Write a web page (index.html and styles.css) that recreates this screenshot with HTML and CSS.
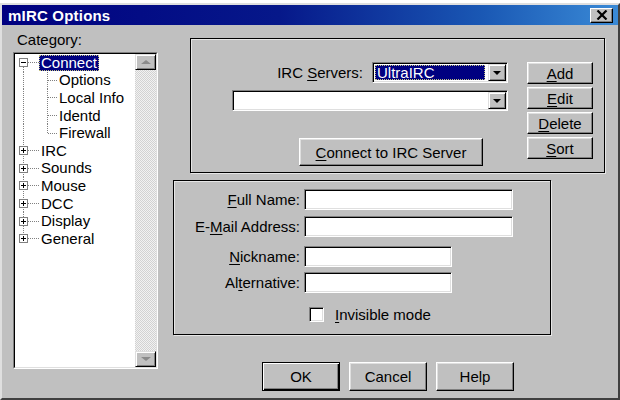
FILE: index.html
```html
<!DOCTYPE html>
<html>
<head>
<meta charset="utf-8">
<title>mIRC Options</title>
<link rel="stylesheet" href="styles.css">
</head>
<body>
<div class="window">
  <div class="titlebar">
    <span class="title">mIRC Options</span>
    <span class="close"><svg width="12" height="10" viewBox="0 0 12 10"><path d="M1.5 0.5 L10.5 9.5 M10.5 0.5 L1.5 9.5" stroke="#000" stroke-width="2.2" fill="none"/></svg></span>
  </div>
  <div class="content">
    <div class="left">
      <div class="cat-label">Category:</div>
      <div class="tree">
        <div class="tree-in">
          <div class="tree-list">
            <div class="row">
              <div class="tg first"><svg class="box" width="9" height="9" viewBox="0 0 9 9"><rect x="0.5" y="0.5" width="8" height="8" fill="#fff" stroke="#808080"/><path d="M2 4.5h5" stroke="#000"/></svg><span class="h"></span></div>
              <span class="lbl sel">Connect</span>
            </div>
            <div class="row"><div class="tg"></div><div class="tc"><span class="h"></span></div><span class="lbl">Options</span></div>
            <div class="row"><div class="tg"></div><div class="tc"><span class="h"></span></div><span class="lbl">Local Info</span></div>
            <div class="row"><div class="tg"></div><div class="tc"><span class="h"></span></div><span class="lbl">Identd</span></div>
            <div class="row"><div class="tg"></div><div class="tc last"><span class="h"></span></div><span class="lbl">Firewall</span></div>
            <div class="row">
              <div class="tg"><svg class="box" width="9" height="9" viewBox="0 0 9 9"><rect x="0.5" y="0.5" width="8" height="8" fill="#fff" stroke="#808080"/><path d="M2 4.5h5M4.5 2v5" stroke="#000"/></svg><span class="h"></span></div>
              <span class="lbl">IRC</span>
            </div>
            <div class="row">
              <div class="tg"><svg class="box" width="9" height="9" viewBox="0 0 9 9"><rect x="0.5" y="0.5" width="8" height="8" fill="#fff" stroke="#808080"/><path d="M2 4.5h5M4.5 2v5" stroke="#000"/></svg><span class="h"></span></div>
              <span class="lbl">Sounds</span>
            </div>
            <div class="row">
              <div class="tg"><svg class="box" width="9" height="9" viewBox="0 0 9 9"><rect x="0.5" y="0.5" width="8" height="8" fill="#fff" stroke="#808080"/><path d="M2 4.5h5M4.5 2v5" stroke="#000"/></svg><span class="h"></span></div>
              <span class="lbl">Mouse</span>
            </div>
            <div class="row">
              <div class="tg"><svg class="box" width="9" height="9" viewBox="0 0 9 9"><rect x="0.5" y="0.5" width="8" height="8" fill="#fff" stroke="#808080"/><path d="M2 4.5h5M4.5 2v5" stroke="#000"/></svg><span class="h"></span></div>
              <span class="lbl">DCC</span>
            </div>
            <div class="row">
              <div class="tg"><svg class="box" width="9" height="9" viewBox="0 0 9 9"><rect x="0.5" y="0.5" width="8" height="8" fill="#fff" stroke="#808080"/><path d="M2 4.5h5M4.5 2v5" stroke="#000"/></svg><span class="h"></span></div>
              <span class="lbl">Display</span>
            </div>
            <div class="row">
              <div class="tg last"><svg class="box" width="9" height="9" viewBox="0 0 9 9"><rect x="0.5" y="0.5" width="8" height="8" fill="#fff" stroke="#808080"/><path d="M2 4.5h5M4.5 2v5" stroke="#000"/></svg><span class="h"></span></div>
              <span class="lbl">General</span>
            </div>
          </div>
          <div class="scrollbar">
            <div class="sb-btn"><span class="arrow-up"></span></div>
            <div class="sb-track"></div>
            <div class="sb-btn"><span class="arrow-down"></span></div>
          </div>
        </div>
      </div>
    </div>

    <div class="right">
      <div class="group gb-server">
        <div class="server-main">
          <div class="server-row">
            <span class="server-label">IRC <u>S</u>ervers:</span>
            <div class="combo c1">
              <div class="combo-field"><span class="sel-text">UltraIRC</span></div>
              <div class="combo-btn"><span class="arrow-down dark"></span></div>
            </div>
          </div>
          <div class="combo c2">
            <div class="combo-field"></div>
            <div class="combo-btn"><span class="arrow-down dark"></span></div>
          </div>
          <div class="btn connect"><span><u>C</u>onnect to IRC Server</span></div>
        </div>
        <div class="server-btns">
          <div class="btn side"><span><u>A</u>dd</span></div>
          <div class="btn side"><span><u>E</u>dit</span></div>
          <div class="btn side"><span><u>D</u>elete</span></div>
          <div class="btn side"><span><u>S</u>ort</span></div>
        </div>
      </div>

      <div class="group gb-user">
        <div class="frow r1"><span class="flabel"><u>F</u>ull Name:</span><div class="input wide"></div></div>
        <div class="frow r2"><span class="flabel">E-<u>M</u>ail Address:</span><div class="input wide"></div></div>
        <div class="frow r3"><span class="flabel"><u>N</u>ickname:</span><div class="input narrow"></div></div>
        <div class="frow r4"><span class="flabel">Al<u>t</u>ernative:</span><div class="input narrow"></div></div>
        <div class="frow r5"><span class="flabel"></span><div class="check"></div><span class="check-text"><u>I</u>nvisible mode</span></div>
      </div>

      <div class="dlg-btns">
        <div class="btn dlg default"><span>OK</span></div>
        <div class="btn dlg"><span>Cancel</span></div>
        <div class="btn dlg"><span>Help</span></div>
      </div>
    </div>
  </div>
</div>
</body>
</html>
```

FILE: styles.css
```css
* { box-sizing: border-box; }
html, body { margin: 0; padding: 0; }
body {
  background: #fff;
  font-family: "Liberation Sans", Arial, sans-serif;
  font-size: 15px;
  color: #000;
  width: 620px;
  height: 400px;
  overflow: hidden;
  padding-top: 3px;
}
u { text-decoration: underline; text-underline-offset: 2px; }

.window {
  width: 620px;
  height: 397px;
  background: #c0c0c0;
  border: 2px solid;
  border-color: #dfdfdf #404040 #404040 #dfdfdf;
  display: flex;
  flex-direction: column;
}

.titlebar {
  height: 20px;
  flex: none;
  background: linear-gradient(to right, #000080 0%, #06188a 45%, #1a58b4 78%, #3a8ad6 100%);
  display: flex;
  align-items: center;
  justify-content: space-between;
  padding: 0 5px 0 6px;
}
.title { color: #fff; font-weight: bold; font-size: 15px; letter-spacing: 0.2px; }
.close {
  width: 23px;
  height: 15px;
  background: #c0c0c0;
  border: 1px solid;
  border-color: #fff #000 #000 #fff;
  box-shadow: inset -1px -1px 0 #808080;
  display: flex;
  align-items: center;
  justify-content: center;
}

.content { flex: 1; display: flex; padding: 6px 0 0 11px; gap: 15px; }

/* left column */
.left { width: 145px; flex: none; display: flex; flex-direction: column; }
.cat-label { height: 17px; line-height: 17px; margin-bottom: 4px; padding-left: 4px; }
.tree {
  height: 317px;
  border: 1px solid;
  border-color: #808080 #fff #fff #808080;
}
.tree-in {
  height: 100%;
  display: flex;
  background: #fff;
  border: 1px solid;
  border-color: #000 #dfdfdf #dfdfdf #000;
}
.tree-list { flex: 1; min-width: 0; }
.row { height: 17.6px; display: flex; align-items: center; }
.tg, .tc {
  height: 100%;
  flex: none;
  display: flex;
  align-items: center;
  background-image: repeating-linear-gradient(to bottom, #808080 0 1px, transparent 1px 2px);
  background-repeat: no-repeat;
  background-size: 1px 100%;
  background-position: 8px 0;
}
.tg { width: 24px; padding-left: 4px; }
.tc { width: 18px; padding-left: 9px; }
.tg.first { background-size: 1px 50%; background-position: 8px 100%; }
.tg.last, .tc.last { background-size: 1px 50%; background-position: 8px 0; }
.box { flex: none; display: block; }
.h {
  flex: 1;
  height: 1px;
  background: repeating-linear-gradient(to right, #808080 0 1px, transparent 1px 2px);
}
.lbl { padding: 0 2px; line-height: 16px; white-space: nowrap; }
.lbl.sel { background: #000080; color: #fff; outline: 1px dotted #c0c080; outline-offset: -1px; }

.scrollbar {
  width: 21px;
  flex: none;
  display: flex;
  flex-direction: column;
  background: repeating-conic-gradient(#d2d2d2 0 25%, #f2f2f2 0 50%) 0 0 / 2px 2px;
}
.sb-btn {
  height: 16px;
  flex: none;
  background: #c0c0c0;
  border: 1px solid;
  border-color: #dfdfdf #000 #000 #dfdfdf;
  box-shadow: inset 1px 1px 0 #fff, inset -1px -1px 0 #808080;
  display: flex;
  align-items: center;
  justify-content: center;
}
.sb-track { flex: 1; }
.arrow-up {
  width: 0; height: 0;
  border-left: 5px solid transparent;
  border-right: 5px solid transparent;
  border-bottom: 4px solid #8a8a8a;
}
.arrow-down {
  width: 0; height: 0;
  border-left: 5px solid transparent;
  border-right: 5px solid transparent;
  border-top: 4px solid #8a8a8a;
}
.arrow-down.dark { border-left-width: 4px; border-right-width: 4px; border-top-color: #000; }

/* right column */
.right { flex: 1; display: flex; flex-direction: column; }
.group {
  border: 1px solid #000;
  box-shadow: 1px 1px 0 #e6e6e6, inset 1px 1px 0 #e6e6e6;
}
.gb-server {
  margin: 7px 0 0 17px;
  width: 415px;
  height: 135px;
  display: flex;
}
.server-main { width: 317px; display: flex; flex-direction: column; padding-top: 23px; }
.server-row { display: flex; align-items: center; justify-content: flex-end; }
.server-label { margin-right: 9px; white-space: nowrap; }

.combo {
  height: 21px;
  display: flex;
  background: #fff;
  border: 1px solid;
  border-color: #808080 #fff #fff #808080;
  box-shadow: inset 1px 1px 0 #000, inset -1px -1px 0 #dfdfdf;
  padding: 1px;
}
.c1 { width: 136px; }
.c2 { width: 276px; margin: 7px 0 0 41px; }
.combo-field { flex: 1; display: flex; padding: 1px; }
.sel-text {
  flex: 1;
  background: #000080;
  color: #fff;
  line-height: 15px;
  padding-left: 2px;
  margin-right: 2px;
  outline: 1px dotted #c0c080;
  outline-offset: -1px;
}
.combo-btn {
  width: 18px;
  flex: none;
  background: #c0c0c0;
  border: 1px solid;
  border-color: #dfdfdf #000 #000 #dfdfdf;
  box-shadow: inset 1px 1px 0 #fff, inset -1px -1px 0 #808080;
  display: flex;
  align-items: center;
  justify-content: center;
}

.btn {
  display: flex;
  align-items: center;
  justify-content: center;
  background: #c0c0c0;
  border: 1px solid;
  border-color: #fff #000 #000 #fff;
  box-shadow: inset -1px -1px 0 #808080, inset 1px 1px 0 #dfdfdf;
  white-space: nowrap;
}
.connect { width: 184px; height: 28px; margin: 27px 0 0 108px; }
.server-btns { width: 66px; margin-left: 19px; padding-top: 23px; display: flex; flex-direction: column; gap: 3px; }
.side { height: 22px; }

.gb-user {
  margin-top: 7px;
  width: 378px;
  height: 155px;
  padding-top: 8px;
  display: flex;
  flex-direction: column;
}
.frow { display: flex; align-items: center; }
.flabel { width: 126px; text-align: right; white-space: nowrap; flex: none; }
.input {
  height: 21px;
  margin-left: 4px;
  background: #fff;
  border: 1px solid;
  border-color: #808080 #fff #fff #808080;
  box-shadow: inset 1px 1px 0 #000, inset -1px -1px 0 #dfdfdf;
}
.wide { width: 209px; }
.narrow { width: 148px; }
.r2 { margin-top: 6px; }
.r3 { margin-top: 9px; }
.r4 { margin-top: 5px; }
.r5 { margin-top: 13px; }
.check {
  width: 15px;
  height: 15px;
  margin-left: 9px;
  background: #fff;
  border: 1px solid;
  border-color: #808080 #fff #fff #808080;
  box-shadow: inset 1px 1px 0 #000, inset -1px -1px 0 #dfdfdf;
  flex: none;
}
.check-text { margin-left: 11px; }

.dlg-btns { display: flex; gap: 9px; margin: 27px 0 0 89px; }
.dlg { width: 78px; height: 29px; }
.btn.default {
  border-color: #000;
  box-shadow: inset 1px 1px 0 #fff, inset -1px -1px 0 #000, inset -2px -2px 0 #808080;
}
```
